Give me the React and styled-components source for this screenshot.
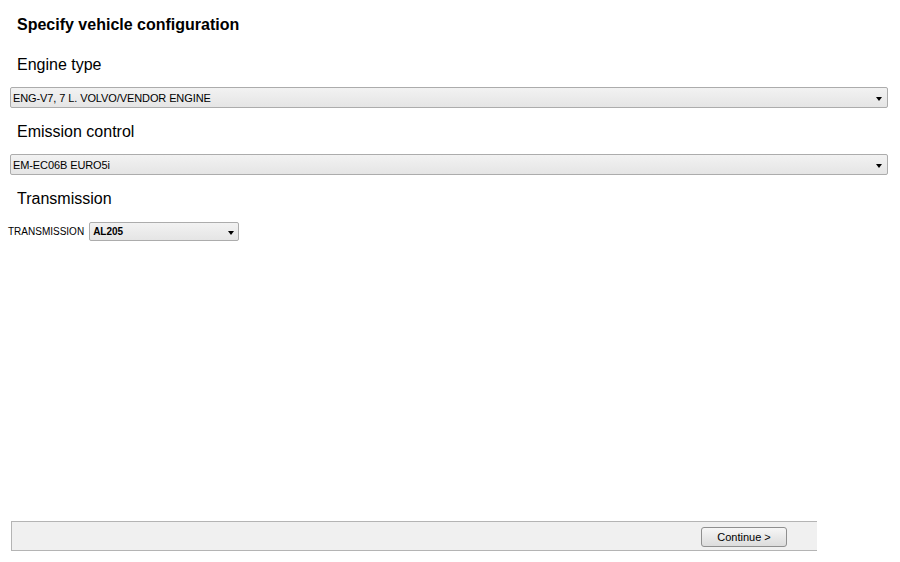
import React from 'react';
import styled, { createGlobalStyle } from 'styled-components';

const GlobalStyle = createGlobalStyle`
  html, body, #root {
    margin: 0;
    height: 100%;
  }
  body {
    background: #fff;
    font-family: "Liberation Sans", Arial, sans-serif;
    color: #000;
  }
`;

const Page = styled.div`
  height: 100%;
  display: flex;
  flex-direction: column;
  padding: 16px 12px 11px 10px;
  box-sizing: border-box;
`;

const Title = styled.h1`
  margin: 0 0 22px 7px;
  font-size: 16px;
  line-height: 18px;
  font-weight: bold;
`;

const Heading = styled.h2`
  margin: 0 0 ${p => p.$mb || 13}px 7px;
  font-size: 16px;
  line-height: 18px;
  font-weight: normal;
`;

const Dropdown = styled.div`
  position: relative;
  box-sizing: border-box;
  height: ${p => (p.$small ? 19 : 21)}px;
  width: ${p => (p.$small ? '150px' : '100%')};
  border: 1px solid #acacac;
  border-radius: 2px;
  background: linear-gradient(#f2f2f2, #e5e5e5);
  display: flex;
  align-items: center;
  padding: 0 20px 0 ${p => (p.$small ? 3 : 2)}px;
  font-size: ${p => (p.$small ? 10 : 11)}px;
  font-weight: ${p => (p.$small ? 'bold' : 'normal')};
  letter-spacing: ${p => (p.$small ? 0 : -0.1)}px;
  margin-bottom: ${p => p.$mb || 0}px;

  &::after {
    content: '';
    position: absolute;
    right: ${p => (p.$small ? 4 : 5)}px;
    top: 50%;
    margin-top: -1px;
    border-left: 3px solid transparent;
    border-right: 3px solid transparent;
    border-top: 4px solid #000;
  }
`;

const Row = styled.div`
  display: flex;
  align-items: center;
  gap: 5px;
  margin-left: -2px;
`;

const SmallLabel = styled.span`
  font-size: 10px;
`;

const Footer = styled.div`
  margin-top: auto;
  margin-left: 1px;
  width: 806px;
  height: 30px;
  box-sizing: border-box;
  background: #f0f0f0;
  border: 1px solid #b4b4b4;
  border-right: none;
  display: flex;
  align-items: center;
  justify-content: flex-end;
  padding-right: 30px;
`;

const Button = styled.button`
  width: 86px;
  height: 20px;
  box-sizing: border-box;
  border: 1px solid #8f8f8f;
  border-radius: 3px;
  background: linear-gradient(#f6f6f6, #dcdcdc);
  font-family: "Liberation Sans", Arial, sans-serif;
  font-size: 11px;
  color: #000;
  padding: 0;
  margin-top: 1px;
`;

export default function App() {
  return (
    <>
      <GlobalStyle />
      <Page>
        <Title>Specify vehicle configuration</Title>

        <Heading>Engine type</Heading>
        <Dropdown $mb={15}>ENG-V7, 7 L. VOLVO/VENDOR ENGINE</Dropdown>

        <Heading>Emission control</Heading>
        <Dropdown $mb={15}>EM-EC06B EURO5i</Dropdown>

        <Heading $mb={14}>Transmission</Heading>
        <Row>
          <SmallLabel>TRANSMISSION</SmallLabel>
          <Dropdown $small>AL205</Dropdown>
        </Row>

        <Footer>
          <Button>Continue &gt;</Button>
        </Footer>
      </Page>
    </>
  );
}
